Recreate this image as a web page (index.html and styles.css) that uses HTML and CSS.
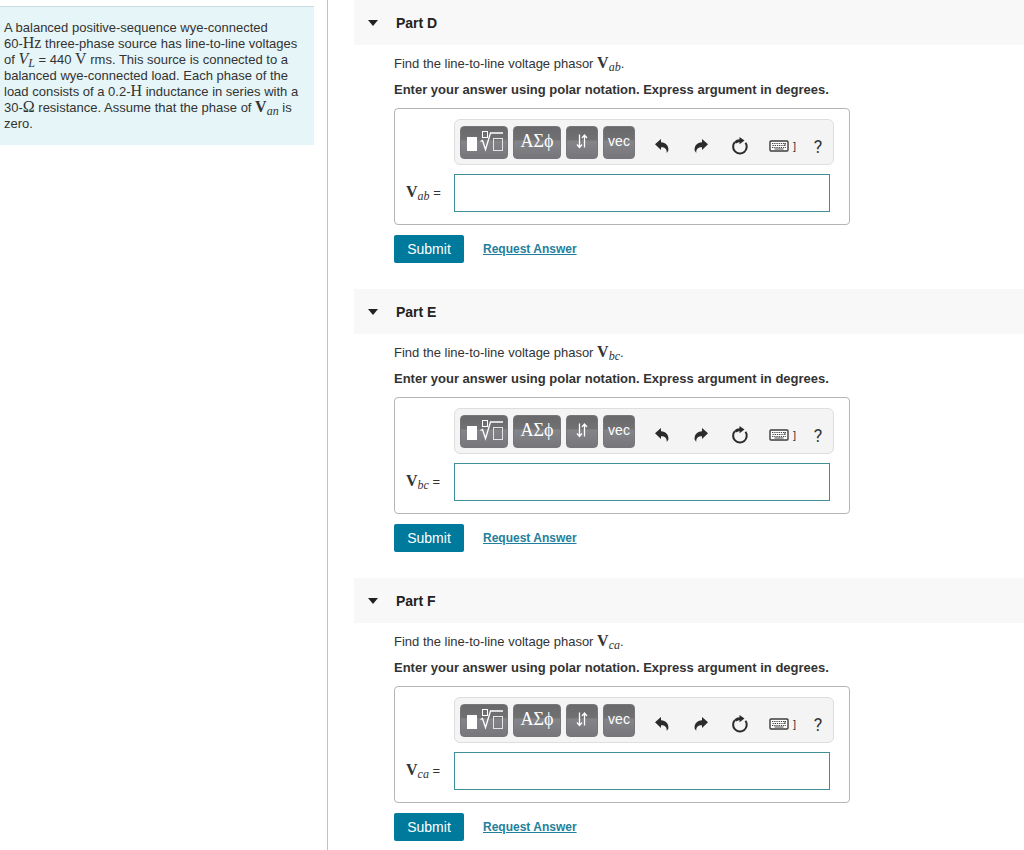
FILE: index.html
```html
<!DOCTYPE html>
<html lang="en">
<head>
<meta charset="UTF-8" />
<meta name="viewport" content="width=device-width, initial-scale=1" />
<title>Balanced Three-Phase Source</title>
<link rel="stylesheet" href="styles.css">
</head>
<body>
  <svg class="sprite" aria-hidden="true">
    <symbol id="icon-root" viewBox="0 0 38 24">
      <rect x="2" y="8" width="10" height="14" fill="#fff" />
      <path d="M15.500 12.500l2-1 3 9L25.500 4H38" fill="none" stroke="#fff" stroke-width="1.300" />
      <rect x="17.500" y="2.500" width="5" height="6" fill="none" stroke="#fff" />
      <rect x="28.500" y="9.500" width="9" height="12" fill="none" stroke="#e4e4e6" />
    </symbol>
    <symbol id="icon-arrows" viewBox="0 0 14 18">
      <path d="M4.500 2.500v12.500M2 12.500l2.500 3L7 12.500M9.500 15.500V3M7 6l2.500-3L12 6" fill="none" stroke="#fff" stroke-width="1.300" />
    </symbol>
    <symbol id="icon-undo" viewBox="0 0 16 16">
      <path d="M1 6.300L7 1v3.200c5 .3 7.700 3.300 7.400 8.300l-1.700 2.500c.4-4-1.600-5.800-5.700-5.800V12z" fill="#2b2b2b" />
    </symbol>
    <symbol id="icon-reset" viewBox="0 0 18 20">
      <path d="M3.800 6.200A6.800 6.800 0 1 0 14.500 6.800" fill="none" stroke="#2b2b2b" stroke-width="2" />
      <path d="M8.500 1l5 3.600-5 3.600V6L4.800 7.500 3.600 5.400C5 4 6.500 3.300 8.500 3.200z" fill="#2b2b2b" />
    </symbol>
    <symbol id="icon-keyboard" viewBox="0 0 20 12">
      <rect x="1" y="1" width="18" height="10" rx="1" fill="#fff" stroke="#3c3c3c" stroke-width="1.400" />
      <path d="M3 3.500h14M3.500 5.500h13M3 7.500h14" stroke="#444" stroke-width="1.100" stroke-dasharray="1.300 .9" />
      <path d="M5.500 9h9M16 3v3" stroke="#444" />
    </symbol>
  </svg>

  <div class="layout">
    <aside class="sidebar">
      <div class="problem">
        A balanced positive-sequence wye-connected<br>
        60-<span class="math">Hz</span> three-phase source has line-to-line voltages<br>
        of <span class="math"><i>V<sub>L</sub></i></span> = 440 <span class="math">V</span> rms. This source is connected to a<br>
        balanced wye-connected load. Each phase of the<br>
        load consists of a 0.2-<span class="math">H</span> inductance in series with a<br>
        30-<span class="math">Ω</span> resistance. Assume that the phase of <span class="math"><b>V</b><sub><i>an</i></sub></span> is<br>
        zero.
      </div>
    </aside>

    <main class="parts">
      <section class="part">
        <h2 class="part-header"><span class="caret"></span>Part D</h2>
        <form class="part-body">
          <p>Find the line-to-line voltage phasor <span class="math"><b>V</b><sub><i>ab</i></sub></span>.</p>
          <p class="hint">Enter your answer using polar notation. Express argument in degrees.</p>
          <div class="answer">
            <div class="toolbar">
              <button type="button" class="tool wide" aria-label="Templates"><svg width="38" height="24"><use href="#icon-root" /></svg></button>
              <button type="button" class="tool wide greek">ΑΣϕ</button>
              <button type="button" class="tool" aria-label="Arrows"><svg width="14" height="18"><use href="#icon-arrows" /></svg></button>
              <button type="button" class="tool">vec</button>
              <div class="actions">
                <button type="button" class="action" aria-label="Undo"><svg width="16" height="16"><use href="#icon-undo" /></svg></button>
                <button type="button" class="action" aria-label="Redo"><svg class="flip" width="16" height="16"><use href="#icon-undo" /></svg></button>
                <button type="button" class="action" aria-label="Reset"><svg width="18" height="20"><use href="#icon-reset" /></svg></button>
                <button type="button" class="action keyboard" aria-label="Keyboard shortcuts"><svg width="20" height="12"><use href="#icon-keyboard" /></svg>]</button>
                <button type="button" class="action help">?</button>
              </div>
            </div>
            <label for="answer-d"><span class="math"><b>V</b><sub><i>ab</i></sub></span> =</label>
            <input type="text" id="answer-d" />
          </div>
          <div class="buttons">
            <button type="submit" class="submit">Submit</button>
            <a href="#">Request Answer</a>
          </div>
        </form>
      </section>

      <section class="part">
        <h2 class="part-header"><span class="caret"></span>Part E</h2>
        <form class="part-body">
          <p>Find the line-to-line voltage phasor <span class="math"><b>V</b><sub><i>bc</i></sub></span>.</p>
          <p class="hint">Enter your answer using polar notation. Express argument in degrees.</p>
          <div class="answer">
            <div class="toolbar">
              <button type="button" class="tool wide" aria-label="Templates"><svg width="38" height="24"><use href="#icon-root" /></svg></button>
              <button type="button" class="tool wide greek">ΑΣϕ</button>
              <button type="button" class="tool" aria-label="Arrows"><svg width="14" height="18"><use href="#icon-arrows" /></svg></button>
              <button type="button" class="tool">vec</button>
              <div class="actions">
                <button type="button" class="action" aria-label="Undo"><svg width="16" height="16"><use href="#icon-undo" /></svg></button>
                <button type="button" class="action" aria-label="Redo"><svg class="flip" width="16" height="16"><use href="#icon-undo" /></svg></button>
                <button type="button" class="action" aria-label="Reset"><svg width="18" height="20"><use href="#icon-reset" /></svg></button>
                <button type="button" class="action keyboard" aria-label="Keyboard shortcuts"><svg width="20" height="12"><use href="#icon-keyboard" /></svg>]</button>
                <button type="button" class="action help">?</button>
              </div>
            </div>
            <label for="answer-e"><span class="math"><b>V</b><sub><i>bc</i></sub></span> =</label>
            <input type="text" id="answer-e" />
          </div>
          <div class="buttons">
            <button type="submit" class="submit">Submit</button>
            <a href="#">Request Answer</a>
          </div>
        </form>
      </section>

      <section class="part">
        <h2 class="part-header"><span class="caret"></span>Part F</h2>
        <form class="part-body">
          <p>Find the line-to-line voltage phasor <span class="math"><b>V</b><sub><i>ca</i></sub></span>.</p>
          <p class="hint">Enter your answer using polar notation. Express argument in degrees.</p>
          <div class="answer">
            <div class="toolbar">
              <button type="button" class="tool wide" aria-label="Templates"><svg width="38" height="24"><use href="#icon-root" /></svg></button>
              <button type="button" class="tool wide greek">ΑΣϕ</button>
              <button type="button" class="tool" aria-label="Arrows"><svg width="14" height="18"><use href="#icon-arrows" /></svg></button>
              <button type="button" class="tool">vec</button>
              <div class="actions">
                <button type="button" class="action" aria-label="Undo"><svg width="16" height="16"><use href="#icon-undo" /></svg></button>
                <button type="button" class="action" aria-label="Redo"><svg class="flip" width="16" height="16"><use href="#icon-undo" /></svg></button>
                <button type="button" class="action" aria-label="Reset"><svg width="18" height="20"><use href="#icon-reset" /></svg></button>
                <button type="button" class="action keyboard" aria-label="Keyboard shortcuts"><svg width="20" height="12"><use href="#icon-keyboard" /></svg>]</button>
                <button type="button" class="action help">?</button>
              </div>
            </div>
            <label for="answer-f"><span class="math"><b>V</b><sub><i>ca</i></sub></span> =</label>
            <input type="text" id="answer-f" />
          </div>
          <div class="buttons">
            <button type="submit" class="submit">Submit</button>
            <a href="#">Request Answer</a>
          </div>
        </form>
      </section>
    </main>
  </div>
</body>
</html>
```

FILE: styles.css
```css
* {
  box-sizing: border-box;
}

body {
  margin: 0;
  background-color: #fff;
  color: #333;
  font-family: "Liberation Sans", Arial, sans-serif;
  font-size: 13px;
  line-height: 16px;
}

button,
input {
  font-family: inherit;
}

.sprite {
  display: none;
}

.layout {
  display: flex;
  min-height: 100vh;
}

.sidebar {
  flex: 0 0 328px;
  padding: 6px 13px 0 0;
  border-right: 1px solid #b3c6d0;
}

.problem {
  padding: 13px 4px;
  border-top: 1px solid #c9dcdf;
  background-color: #e6f5f7;
  white-space: nowrap;
}

/* math symbols */
.math {
  font-family: "Liberation Serif", "Times New Roman", serif;
  font-size: 16px;
  line-height: 1px;
}

.math sub {
  font-size: 12px;
  line-height: 1px;
  vertical-align: -3px;
}

.parts {
  flex: 1;
  min-width: 0;
  padding-left: 26px;
}

.part-header {
  display: flex;
  align-items: center;
  gap: 18px;
  height: 45px;
  margin: 0;
  padding-left: 14px;
  background-color: #f8f8f8;
  color: #222;
  font-size: 14px;
}

.caret {
  border: 5px solid transparent;
  border-top: 6px solid #222;
  border-bottom: 0;
}

.part-body {
  padding: 11px 40px 26px;
}

.part-body p {
  margin: 0 0 10px;
}

.part-body .hint {
  font-weight: bold;
}

.answer {
  display: grid;
  grid-template-columns: 48px 1fr;
  row-gap: 9px;
  align-items: center;
  max-width: 456px;
  padding: 10px 15px 12px 11px;
  border: 1px solid #b5b5b5;
  border-radius: 4px;
}

.toolbar {
  grid-column: 2;
  display: flex;
  align-items: center;
  gap: 5px;
  height: 46px;
  padding: 0 5px;
  border: 1px solid #dedede;
  border-radius: 6px;
  background-color: #f4f4f4;
}

.tool {
  display: flex;
  align-items: center;
  justify-content: center;
  width: 32px;
  height: 33px;
  padding: 0 0 2px;
  border: 1px solid #77777b;
  border-radius: 4px;
  background: linear-gradient(#69696b, #717173 43%, #858589 44%, #77777b);
  color: #fff;
  font-size: 14px;
}

.wide {
  width: 48px;
}

.greek {
  font-family: "Liberation Serif", serif;
  font-size: 18px;
}

.actions {
  display: flex;
  align-items: center;
  gap: 19px;
  padding: 8px 0 0 12px;
}

.action {
  display: flex;
  flex: none;
  align-items: center;
  justify-content: center;
  width: 20px;
  padding: 0;
  border: 0;
  background: none;
  color: #333;
}

.flip {
  transform: scaleX(-1);
}

.keyboard {
  justify-content: flex-start;
  gap: 4px;
  font-size: 11px;
}

.keyboard svg {
  flex: none;
}

.help {
  font-family: Roboto, sans-serif;
  font-size: 18px;
}

.answer input {
  width: 100%;
  max-width: 376px;
  height: 38px;
  border: 1px solid #3f8f9b;
  font-size: 14px;
}

.buttons {
  display: flex;
  align-items: center;
  gap: 19px;
  margin-top: 10px;
}

.submit {
  width: 70px;
  height: 28px;
  padding: 0;
  border: 0;
  border-radius: 2px;
  background-color: #007a9c;
  color: #fff;
  font-size: 14px;
}

.buttons a {
  color: #1f7f9c;
  font-size: 12px;
  font-weight: bold;
}
```
